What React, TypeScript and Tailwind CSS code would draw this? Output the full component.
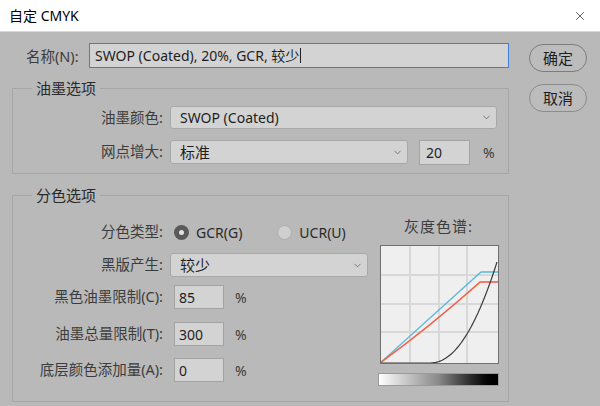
import { ChevronDown, X } from "lucide-react";

const font = { fontFamily: '"Noto Sans", "Noto Sans CJK SC", sans-serif' };

function Select({ value, className, textSize }: { value: string; className: string; textSize: string }) {
  return (
    <div
      className={`flex items-center justify-between rounded-[3px] border border-[#a8a8a8] bg-[#d3d3d3] pl-[9px] pr-[4px] text-[#1e1e1e] ${textSize} ${className}`}
    >
      <span>{value}</span>
      <ChevronDown className="h-[11px] w-[11px] text-[#555]" strokeWidth={1.5} />
    </div>
  );
}

function NumField({ value }: { value: string }) {
  return (
    <div className="flex h-[24px] w-[50px] items-center border border-[#a3a3a3] bg-[#d3d3d3] pl-[4px] text-[14px] text-[#1e1e1e]">
      {value}
    </div>
  );
}

// 黑版曲线：前 50 像素贴底，之后大致按平方上升
const blackCurve = [
  "0,118",
  ...Array.from({ length: 68 }, (_, i) => {
    const x = 50 + i;
    const y = 118 - 101 * Math.pow(i / 67, 2.1);
    return `${x},${y.toFixed(1)}`;
  }),
].join(" ");

function GrayRamp() {
  const grid = [30, 59, 87];
  return (
    <svg width="119" height="119" viewBox="0 0 119 119" className="block">
      <rect x="0" y="0" width="119" height="119" fill="#efefef" />
      {grid.map((p) => (
        <g key={p}>
          <line x1={p} y1="0" x2={p} y2="119" stroke="#d8d8d8" strokeWidth="2" />
          <line x1="0" y1={p} x2="119" y2={p} stroke="#d8d8d8" strokeWidth="2" />
        </g>
      ))}
      <polyline points="0,118 101,27 118,27" fill="none" stroke="#57b8d8" strokeWidth="1.3" />
      <polyline points="0,118.5 45,84 101,37 118,37" fill="none" stroke="#f2cf43" strokeWidth="1.2" />
      <path d="M0 118 Q52 80 100 37 L118 37" fill="none" stroke="#f25a5f" strokeWidth="1.5" />
      <polyline points={blackCurve} fill="none" stroke="#3a3a3a" strokeWidth="1.2" />
      <rect x="0.5" y="0.5" width="118" height="118" fill="none" stroke="#6f6f6f" />
    </svg>
  );
}

export default function App() {
  return (
    <div className="flex h-[406px] w-[600px] flex-col overflow-hidden bg-[#b9b9b9] text-[#3c3c3c]" style={font}>
      {/* 标题栏 */}
      <div className="flex h-[32px] shrink-0 items-center justify-between border-b border-[#dadada] bg-white pl-[9px] pr-[13px] text-[14px] text-black">
        <span>自定 CMYK</span>
        <X className="h-[14px] w-[14px] text-[#333]" strokeWidth={1.3} />
      </div>

      <div className="flex">
        <div className="w-[509px] pl-[12px]">
          {/* 名称 */}
          <div className="mt-[11px] flex h-[25px] items-center">
            <span className="w-[70px] pl-[14px] text-[14.5px] leading-[20px]">名称(N):</span>
            <div className="ml-[7px] flex h-[25px] flex-1 items-center border border-[#3d7fd8] bg-[#d3d3d3] pl-[5px] text-[14px] text-[#1e1e1e]">
              SWOP (Coated), 20%, GCR, 较少<span className="ml-[1px] h-[15px] w-px bg-[#222]" />
            </div>
          </div>

          {/* 油墨选项 */}
          <fieldset className="mt-[10px] border border-[#a6a6a6] pb-[9px]">
            <legend className="ml-[19px] px-[4px] text-[15px] leading-[20px] text-[#2a2a2a]">油墨选项</legend>
            <div className="mt-[8px] flex h-[23px] items-center">
              <span className="w-[150px] text-right text-[14.5px]">油墨颜色:</span>
              <Select value="SWOP (Coated)" textSize="text-[14px]" className="ml-[7px] h-[23px] w-[327px]" />
            </div>
            <div className="mt-[11px] flex h-[24px] items-center">
              <span className="w-[150px] text-right text-[14.5px]">网点增大:</span>
              <Select value="标准" textSize="text-[15px]" className="ml-[7px] h-[24px] w-[238px]" />
              <div className="ml-[11px] flex h-[25px] w-[51px] items-center border border-[#a3a3a3] bg-[#d3d3d3] pl-[6px] text-[14px] text-[#1e1e1e]">
                20
              </div>
              <span className="ml-[13px] text-[14px]">%</span>
            </div>
          </fieldset>

          {/* 分色选项 */}
          <fieldset className="mt-[11px] flex border border-[#a6a6a6] pb-[15px]">
            <legend className="ml-[19px] px-[4px] text-[15px] leading-[20px] text-[#2a2a2a]">分色选项</legend>
            <div className="flex flex-1 justify-between">
              <div className="flex flex-col">
                <div className="mt-[17px] flex h-[20px] items-center">
                  <span className="w-[150px] text-right text-[14.5px]">分色类型:</span>
                  <span className="ml-[11px] flex h-[15px] w-[15px] items-center justify-center rounded-full bg-[#595959]">
                    <span className="h-[5px] w-[5px] rounded-full bg-[#e2e2e2]" />
                  </span>
                  <span className="ml-[7px] text-[14px] text-[#2a2a2a]">GCR(G)</span>
                  <span className="ml-[35px] h-[15px] w-[15px] rounded-full border border-[#ababab] bg-[#cfcfcf]" />
                  <span className="ml-[7px] text-[14px] text-[#2a2a2a]">UCR(U)</span>
                </div>
                <div className="mt-[11px] flex h-[24px] items-center">
                  <span className="w-[150px] text-right text-[14.5px]">黑版产生:</span>
                  <Select value="较少" textSize="text-[15px]" className="ml-[7px] h-[24px] w-[198px]" />
                </div>
                <div className="mt-[8px] flex h-[24px] items-center">
                  <span className="w-[150px] text-right text-[14.5px]">黑色油墨限制(C):</span>
                  <div className="ml-[11px]">
                    <NumField value="85" />
                  </div>
                  <span className="ml-[11px] text-[14px]">%</span>
                </div>
                <div className="mt-[13px] flex h-[24px] items-center">
                  <span className="w-[150px] text-right text-[14.5px]">油墨总量限制(T):</span>
                  <div className="ml-[11px]">
                    <NumField value="300" />
                  </div>
                  <span className="ml-[11px] text-[14px]">%</span>
                </div>
                <div className="mt-[12px] flex h-[24px] items-center">
                  <span className="w-[150px] whitespace-nowrap text-right text-[14.5px]">底层颜色添加量(A):</span>
                  <div className="ml-[11px]">
                    <NumField value="0" />
                  </div>
                  <span className="ml-[11px] text-[14px]">%</span>
                </div>
              </div>

              <div className="mr-[9px] flex w-[121px] flex-col items-center">
                <span className="mt-[11px] text-[15px] leading-[20px] tracking-[1px]">灰度色谱:</span>
                <div className="mt-[9px] ml-[2px]">
                  <GrayRamp />
                </div>
                <div className="mt-[9px] h-[13px] w-[121px] border border-[#9a9a9a] bg-gradient-to-r from-white via-[#8a8a8a] to-black" />
              </div>
            </div>
          </fieldset>
        </div>

        {/* 按钮 */}
        <div className="ml-[20px] flex flex-col">
          <button className="mt-[12px] h-[28px] w-[58px] rounded-full border border-[#7c7c7c] bg-[#bcbcbc] text-[15px] text-[#1e1e1e]">
            确定
          </button>
          <button className="mt-[12px] h-[28px] w-[58px] rounded-full border border-[#8c8c8c] bg-[#bcbcbc] text-[15px] text-[#1e1e1e]">
            取消
          </button>
        </div>
      </div>
    </div>
  );
}
